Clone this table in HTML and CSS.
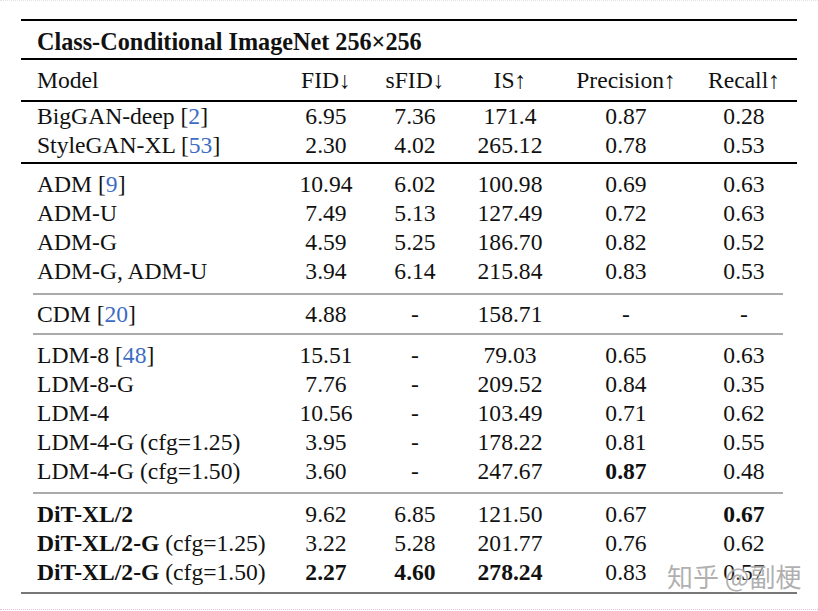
FILE: index.html
```html
<!DOCTYPE html>
<html lang="en">
<head>
<meta charset="utf-8">
<title>Class-Conditional ImageNet 256×256</title>
<link rel="stylesheet" href="styles.css">
</head>
<body>
<div class="page">
  <div class="table">
    <div class="title">Class-Conditional ImageNet 256×256</div>
    <div class="row head">
      <span class="model">Model</span><span>FID↓</span><span>sFID↓</span><span>IS↑</span><span>Precision↑</span><span>Recall↑</span>
    </div>
    <div class="group g1">
      <div class="row"><span class="model">BigGAN-deep <a class="cite">[<em>2</em>]</a></span><span>6.95</span><span>7.36</span><span>171.4</span><span>0.87</span><span>0.28</span></div>
      <div class="row"><span class="model">StyleGAN-XL <a class="cite">[<em>53</em>]</a></span><span>2.30</span><span>4.02</span><span>265.12</span><span>0.78</span><span>0.53</span></div>
    </div>
    <div class="group g2">
      <div class="row"><span class="model">ADM <a class="cite">[<em>9</em>]</a></span><span>10.94</span><span>6.02</span><span>100.98</span><span>0.69</span><span>0.63</span></div>
      <div class="row"><span class="model">ADM-U</span><span>7.49</span><span>5.13</span><span>127.49</span><span>0.72</span><span>0.63</span></div>
      <div class="row"><span class="model">ADM-G</span><span>4.59</span><span>5.25</span><span>186.70</span><span>0.82</span><span>0.52</span></div>
      <div class="row"><span class="model">ADM-G, ADM-U</span><span>3.94</span><span>6.14</span><span>215.84</span><span>0.83</span><span>0.53</span></div>
    </div>
    <div class="rule-gray"></div>
    <div class="group g3">
      <div class="row"><span class="model">CDM <a class="cite">[<em>20</em>]</a></span><span>4.88</span><span>-</span><span>158.71</span><span>-</span><span>-</span></div>
    </div>
    <div class="rule-gray"></div>
    <div class="group g4">
      <div class="row"><span class="model">LDM-8 <a class="cite">[<em>48</em>]</a></span><span>15.51</span><span>-</span><span>79.03</span><span>0.65</span><span>0.63</span></div>
      <div class="row"><span class="model">LDM-8-G</span><span>7.76</span><span>-</span><span>209.52</span><span>0.84</span><span>0.35</span></div>
      <div class="row"><span class="model">LDM-4</span><span>10.56</span><span>-</span><span>103.49</span><span>0.71</span><span>0.62</span></div>
      <div class="row"><span class="model">LDM-4-G (cfg=1.25)</span><span>3.95</span><span>-</span><span>178.22</span><span>0.81</span><span>0.55</span></div>
      <div class="row"><span class="model">LDM-4-G (cfg=1.50)</span><span>3.60</span><span>-</span><span>247.67</span><span><b>0.87</b></span><span>0.48</span></div>
    </div>
    <div class="rule-gray"></div>
    <div class="group g5">
      <div class="row"><span class="model"><b>DiT-XL/2</b></span><span>9.62</span><span>6.85</span><span>121.50</span><span>0.67</span><span><b>0.67</b></span></div>
      <div class="row"><span class="model"><b>DiT-XL/2-G</b> (cfg=1.25)</span><span>3.22</span><span>5.28</span><span>201.77</span><span>0.76</span><span>0.62</span></div>
      <div class="row"><span class="model"><b>DiT-XL/2-G</b> (cfg=1.50)</span><span><b>2.27</b></span><span><b>4.60</b></span><span><b>278.24</b></span><span>0.83</span><span>0.57</span></div>
    </div>
  </div>
  <div class="dots"></div>
  <div class="watermark">知乎 @副梗</div>
</div>
</body>
</html>
```

FILE: styles.css
```css
html, body {
  margin: 0;
  padding: 0;
  background: #ffffff;
}

.page {
  position: relative;
  width: 818px;
  height: 611px;
  box-sizing: border-box;
  padding-top: 18px;
  border-top: 1px dotted #e2e2e2;
  font-family: "Liberation Serif", "Times New Roman", serif;
  color: #111;
  overflow: hidden;
}

.table {
  margin-left: 21px;
  width: 776px;
  border-top: 2px solid #000;
}

.title {
  padding: 4px 0 0 16px;
  height: 33px;
  line-height: 33px;
  font-size: 24.2px;
  font-weight: bold;
  border-bottom: 2px solid #000;
}

.row {
  display: grid;
  grid-template-columns: 260px 90px 88px 102px 130px 106px;
  height: 29px;
  line-height: 29px;
  font-size: 23.6px;
  white-space: nowrap;
}

.row span {
  text-align: center;
}

.row span.model {
  text-align: left;
  padding-left: 16px;
}

.head {
  padding: 6px 0 5px;
  border-bottom: 2px solid #000;
}

.cite {
  color: #111;
  text-decoration: none;
}

.cite em {
  font-style: normal;
  color: #3d6cc4;
}

.group.g1 {
  padding: 0 0 2px;
  border-bottom: 2px solid #000;
}

.group.g2 {
  padding: 6px 0 7px;
}

.group.g3 {
  padding: 5px 0 4px;
}

.group.g4 {
  padding: 6px 0 6px;
}

.group.g5 {
  padding: 6px 0 5px;
  border-bottom: 2px solid #777;
}

.rule-gray {
  height: 2px;
  margin: 0 14px 0 12px;
  background: #aaaaaa;
}

.dots {
  margin-top: 15px;
  border-top: 1px dotted #e6bde6;
}

.watermark {
  position: absolute;
  left: 667px;
  top: 558px;
  font-family: "Noto Sans CJK SC", "Noto Sans", sans-serif;
  font-size: 26px;
  line-height: 34px;
  color: rgba(150, 150, 150, 0.75);
  text-shadow: 0 0 2px rgba(255, 255, 255, 0.9);
  white-space: nowrap;
}
```
